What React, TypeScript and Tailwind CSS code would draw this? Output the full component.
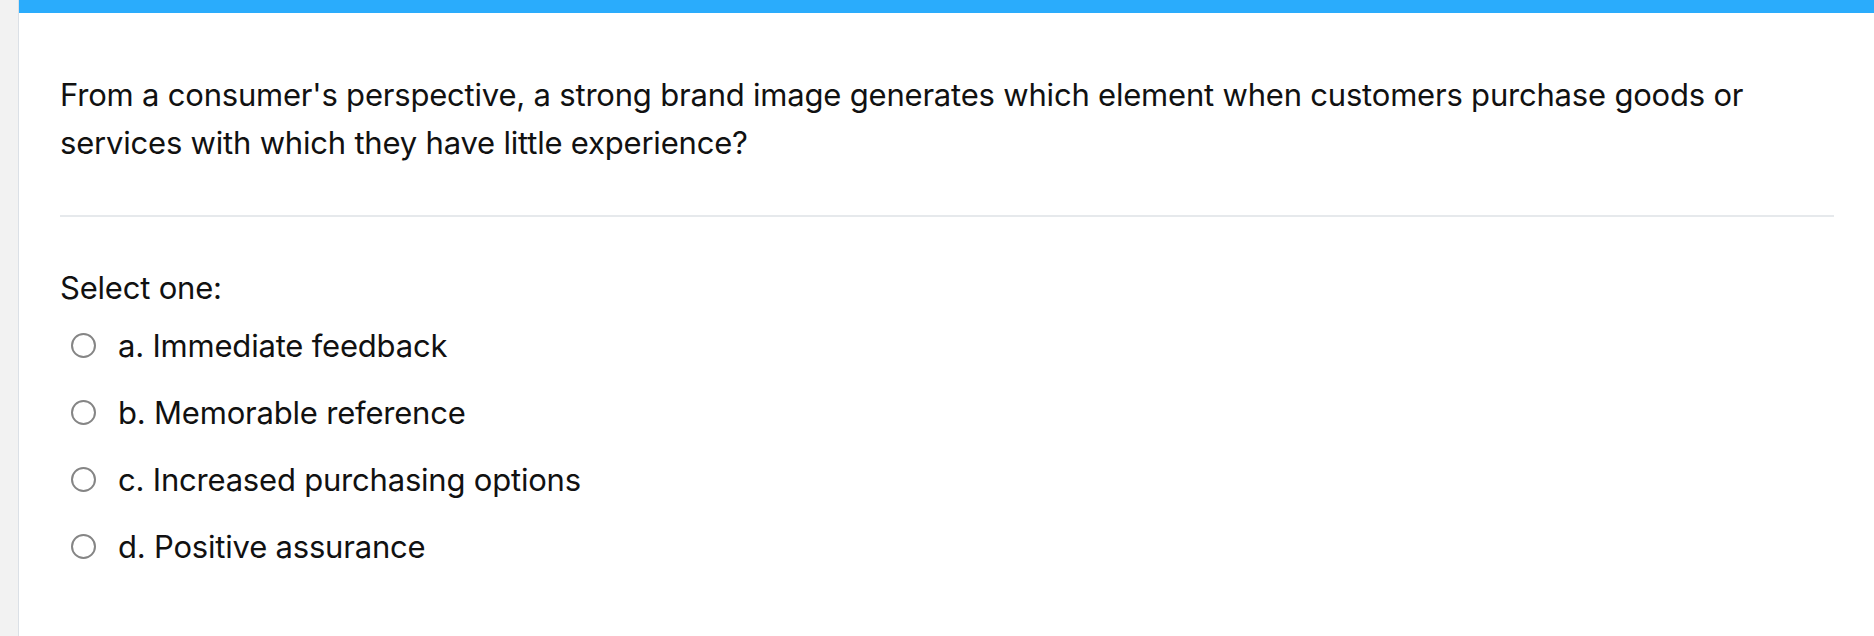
import React from 'react';

const options = [
  'a. Immediate feedback',
  'b. Memorable reference',
  'c. Increased purchasing options',
  'd. Positive assurance',
];

const App: React.FC = () => {
  return (
    <div
      className="flex h-[636px] w-full overflow-hidden bg-white text-[#111]"
      style={{ fontFamily: 'Inter, "Noto Sans", sans-serif' }}
    >
      {/* left gutter */}
      <div className="w-[19px] shrink-0 bg-[#f2f2f2] border-r border-[#dbe0e6]" />

      {/* question card */}
      <div className="flex-1 flex flex-col">
        <div className="h-[13px] bg-[#2aacfc]" />
        <div className="pl-[41px] pr-[40px] pt-[58px] tracking-[-0.2px]">
          <div className="text-[31px] leading-[48px]">
            From a consumer's perspective, a strong brand image generates which element when customers purchase goods or
            services with which they have little experience?
          </div>

          <hr className="mt-[48px] border-t-2 border-[#e6e9ec]" />

          <div className="mt-[47px] text-[31px] leading-[48px]">Select one:</div>

          <div className="flex flex-col">
            {options.map((opt) => (
              <label key={opt} className="flex items-center h-[67px] pl-[11px] cursor-pointer">
                <span className="w-[25px] h-[25px] rounded-full border-2 border-[#858585] shrink-0" />
                <span className="ml-[22px] text-[31px] leading-[48px]">{opt}</span>
              </label>
            ))}
          </div>
        </div>
      </div>
    </div>
  );
};

export default App;
